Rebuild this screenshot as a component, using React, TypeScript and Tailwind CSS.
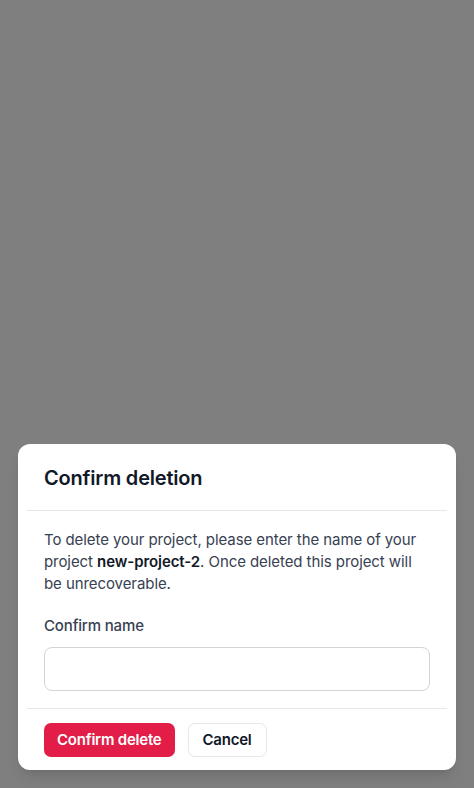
export default function App() {
  return (
    <div
      className="flex h-[788px] w-full flex-col justify-end bg-[#7f7f7f] px-[18px] pb-[18px]"
      style={{ fontFamily: "Inter, 'Noto Sans', sans-serif" }}
    >
      {/* Dialog */}
      <div className="rounded-[12px] bg-white shadow-lg">
        {/* Header */}
        <div className="px-[26px] pt-[20px] pb-[18px]">
          <h2 className="text-[20px] leading-[28px] font-semibold tracking-[-0.01em] text-[#111827]">
            Confirm deletion
          </h2>
        </div>
        <div className="mx-[9px] h-px bg-[#e5e7eb]" />

        {/* Body */}
        <div className="px-[26px] pt-[18px] pb-[17px]">
          <p className="max-w-[380px] text-[15px] leading-[22px] tracking-[-0.005em] text-[#374151]">
            To delete your project, please enter the name of your project{" "}
            <span className="font-semibold text-[#111827]">new-project-2</span>. Once deleted this
            project will be unrecoverable.
          </p>
          <label className="mt-[19px] block text-[15px] leading-[24px] font-medium tracking-[-0.01em] text-[#374151]">
            Confirm name
          </label>
          <input
            type="text"
            className="mt-[9px] block h-[44px] w-full rounded-[8px] border border-[#d4d4d8] bg-white px-3 text-[15px] outline-none"
          />
        </div>
        <div className="mx-[9px] h-px bg-[#e5e7eb]" />

        {/* Footer */}
        <div className="flex items-center gap-[13px] px-[26px] pt-[14px] pb-[13px]">
          <button className="h-[34px] rounded-[7px] bg-[#e11d48] px-[13px] text-[15px] font-semibold tracking-[-0.015em] text-white">
            Confirm delete
          </button>
          <button className="h-[34px] rounded-[7px] border border-[#e5e7eb] bg-white px-[14px] text-[15px] font-semibold tracking-[-0.015em] text-[#111827]">
            Cancel
          </button>
        </div>
      </div>
    </div>
  );
}
